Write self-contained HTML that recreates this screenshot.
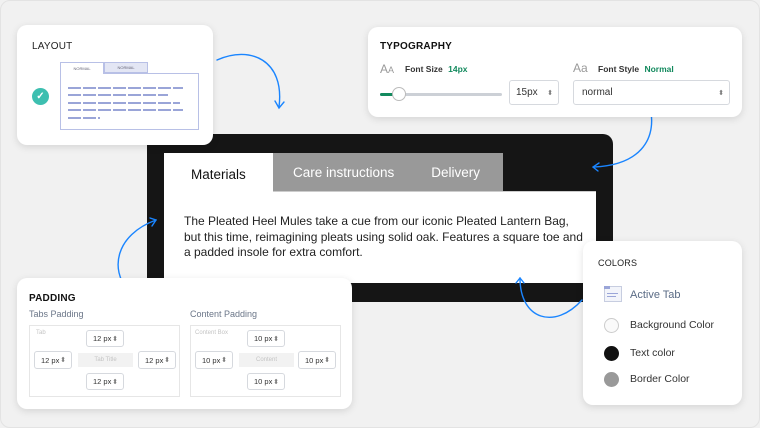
<!DOCTYPE html>
<html><head><style>
*{box-sizing:border-box;margin:0;padding:0}
body{width:760px;height:428px;background:#f1f1f1;font-family:"Liberation Sans",sans-serif;position:relative;overflow:hidden;color:#111}
.frame{position:absolute;left:0;top:0;width:760px;height:428px;border:1px solid #e3e3e3;border-radius:10px}
.card{position:absolute;background:#fff;border-radius:10px;box-shadow:0 2px 8px rgba(0,0,0,.12)}
.h{font-size:10px;font-weight:bold;letter-spacing:.2px;position:absolute}
.abs{position:absolute}
.sel{position:absolute;border:1px solid #d6d9de;border-radius:3px;background:#fff;font-size:7.5px;color:#333;padding-left:6px;display:flex;align-items:center}
.sel:after{content:"⬍";position:absolute;right:5px;font-size:7px;color:#777}
.line{position:absolute;height:1.5px;background:repeating-linear-gradient(90deg,#9aa5d8 0 13px,transparent 13px 15px)}
</style></head><body>
<div class="frame"></div>

<div class="abs" style="left:147px;top:134px;width:466px;height:168px;background:#151515;border-radius:10px"></div>
<div class="abs" style="left:164px;top:191px;width:432px;height:92px;background:#fff;border-top:1px solid #ccc"></div>
<div class="abs" style="left:164px;top:153px;width:109px;height:39px;background:#fff;font-size:13.5px;color:#111;padding:14px 0 0 27px">Materials</div>
<div class="abs" style="left:273px;top:153px;width:230px;height:38px;background:#999;font-size:13.5px;color:#fff;padding:12px 0 0 20px">Care instructions<span style="margin-left:37px">Delivery</span></div>
<div class="abs" style="left:184px;top:214px;white-space:nowrap;font-size:12px;line-height:15.5px;color:#222">The Pleated Heel Mules take a cue from our iconic Pleated Lantern Bag,<br>but this time, reimagining pleats using solid oak. Features a square toe and<br>a padded insole for extra comfort.</div>

<svg class="abs" style="left:0;top:0" width="760" height="428" fill="none" stroke="#1a85ff" stroke-width="1.4" stroke-linecap="round">
<path d="M217 60 C250 45,285 60,279 107"/><path d="M275 101 L279 108 L284 102"/>
<path d="M651 112 C655 140,640 165,594 167"/><path d="M599 163 L593 167 L598 171"/>
<path d="M128 290 C110 270,115 235,156 220"/><path d="M150 218 L156 220 L152 226"/>
<path d="M582 300 C555 330,520 320,520 278"/><path d="M516 283 L520 278 L524 283"/>
</svg>

<div class="card" style="left:17px;top:25px;width:196px;height:120px">
<div class="h" style="left:15px;top:16px;font-weight:normal;color:#222">LAYOUT</div>
<div class="abs" style="left:15px;top:63px;width:17px;height:17px;border-radius:50%;background:#3dbfb0;color:#fff;font-size:10px;text-align:center;line-height:17px;font-weight:bold">✓</div>
<div class="abs" style="left:43px;top:48px;width:139px;height:57px;border:1px solid #b8c0e6"></div>
<div class="abs" style="left:43px;top:37px;width:44px;height:12px;background:#fff;border:1px solid #b8c0e6;border-bottom:none;font-size:4px;text-align:center;line-height:11px;color:#667">NORMAL</div>
<div class="abs" style="left:87px;top:37px;width:44px;height:11px;background:#e3e6f4;border:1px solid #b8c0e6;font-size:4px;text-align:center;line-height:10px;color:#667">NORMAL</div>
<div class="line" style="left:51px;top:62px;width:115px"></div>
<div class="line" style="left:51px;top:69px;width:100px"></div>
<div class="line" style="left:51px;top:77px;width:112px"></div>
<div class="line" style="left:51px;top:84px;width:115px"></div>
<div class="line" style="left:51px;top:92px;width:32px"></div>
</div>

<div class="card" style="left:368px;top:27px;width:374px;height:90px">
<div class="h" style="left:12px;top:14px">TYPOGRAPHY</div>
<div class="abs" style="left:12px;top:35px;font-size:12px;color:#999">A<span style="font-size:9px">A</span></div>
<div class="abs" style="left:37px;top:37px;font-size:8.5px;font-weight:bold;color:#333">Font Size <span style="color:#138a5e;margin-left:3px">14px</span></div>
<div class="abs" style="left:12px;top:66px;width:122px;height:3px;background:#ccd0d6;border-radius:2px"></div>
<div class="abs" style="left:12px;top:66px;width:18px;height:3px;background:#138a5e;border-radius:2px"></div>
<div class="abs" style="left:24px;top:60px;width:14px;height:14px;border-radius:50%;background:#fff;border:1px solid #bbb"></div>
<div class="sel" style="left:141px;top:53px;width:50px;height:25px;font-size:10px">15px</div>
<div class="abs" style="left:205px;top:34px;font-size:12px;color:#999">Aa</div>
<div class="abs" style="left:230px;top:37px;font-size:8.5px;font-weight:bold;color:#333">Font Style <span style="color:#138a5e;margin-left:3px">Normal</span></div>
<div class="sel" style="left:205px;top:53px;width:157px;height:25px;font-size:10px;padding-left:8px">normal</div>
</div>

<div class="card" style="left:17px;top:278px;width:335px;height:131px">
<div class="h" style="left:12px;top:15px">PADDING</div>
<div class="abs" style="left:12px;top:31px;font-size:9px;color:#6b7688">Tabs Padding</div>
<div class="abs" style="left:173px;top:31px;font-size:9px;color:#6b7688">Content Padding</div>
<div class="abs" style="left:12px;top:47px;width:151px;height:72px;border:1px solid #e6e6e6"></div>
<div class="abs" style="left:173px;top:47px;width:151px;height:72px;border:1px solid #e6e6e6"></div>
<div class="abs" style="left:19px;top:52px;font-size:6px;color:#c4c4c4">Tab</div>
<div class="abs" style="left:178px;top:52px;font-size:6px;color:#c4c4c4">Content Box</div>
<div class="abs" style="left:61px;top:75px;width:55px;height:14px;background:#f2f2f2;font-size:6px;color:#c4c4c4;text-align:center;line-height:14px">Tab Title</div>
<div class="abs" style="left:222px;top:75px;width:55px;height:14px;background:#f2f2f2;font-size:6px;color:#c4c4c4;text-align:center;line-height:14px">Content</div>
<div class="sel" style="left:69px;top:52px;width:38px;height:17px">12 px</div>
<div class="sel" style="left:17px;top:73px;width:38px;height:18px">12 px</div>
<div class="sel" style="left:121px;top:73px;width:38px;height:18px">12 px</div>
<div class="sel" style="left:69px;top:95px;width:38px;height:17px">12 px</div>
<div class="sel" style="left:230px;top:52px;width:38px;height:17px">10 px</div>
<div class="sel" style="left:178px;top:73px;width:38px;height:18px">10 px</div>
<div class="sel" style="left:281px;top:73px;width:38px;height:18px">10 px</div>
<div class="sel" style="left:230px;top:95px;width:38px;height:17px">10 px</div>
</div>

<div class="card" style="left:583px;top:241px;width:159px;height:164px">
<div class="h" style="left:15px;top:17px;font-size:9px;font-weight:normal;color:#222">COLORS</div>
<div class="abs" style="left:21px;top:45px;width:18px;height:16px;border:1px solid #c7cde0;background:#f2f4fa"></div>
<div class="abs" style="left:21px;top:45px;width:6px;height:3px;background:#9aa5d8"></div>
<div class="abs" style="left:24px;top:52px;width:11px;height:1px;background:#9aa5d8"></div>
<div class="abs" style="left:24px;top:55px;width:9px;height:1px;background:#9aa5d8"></div>
<div class="abs" style="left:47px;top:48px;font-size:11px;color:#5a6b85">Active Tab</div>
<div class="abs" style="left:21px;top:77px;width:15px;height:15px;border-radius:50%;border:1px solid #ccc;background:#fafafa"></div>
<div class="abs" style="left:47px;top:78px;font-size:10.5px;color:#333">Background Color</div>
<div class="abs" style="left:21px;top:105px;width:15px;height:15px;border-radius:50%;background:#111"></div>
<div class="abs" style="left:47px;top:106px;font-size:10.5px;color:#333">Text color</div>
<div class="abs" style="left:21px;top:131px;width:15px;height:15px;border-radius:50%;background:#999"></div>
<div class="abs" style="left:47px;top:132px;font-size:10.5px;color:#333">Border Color</div>
</div>
</body></html>
